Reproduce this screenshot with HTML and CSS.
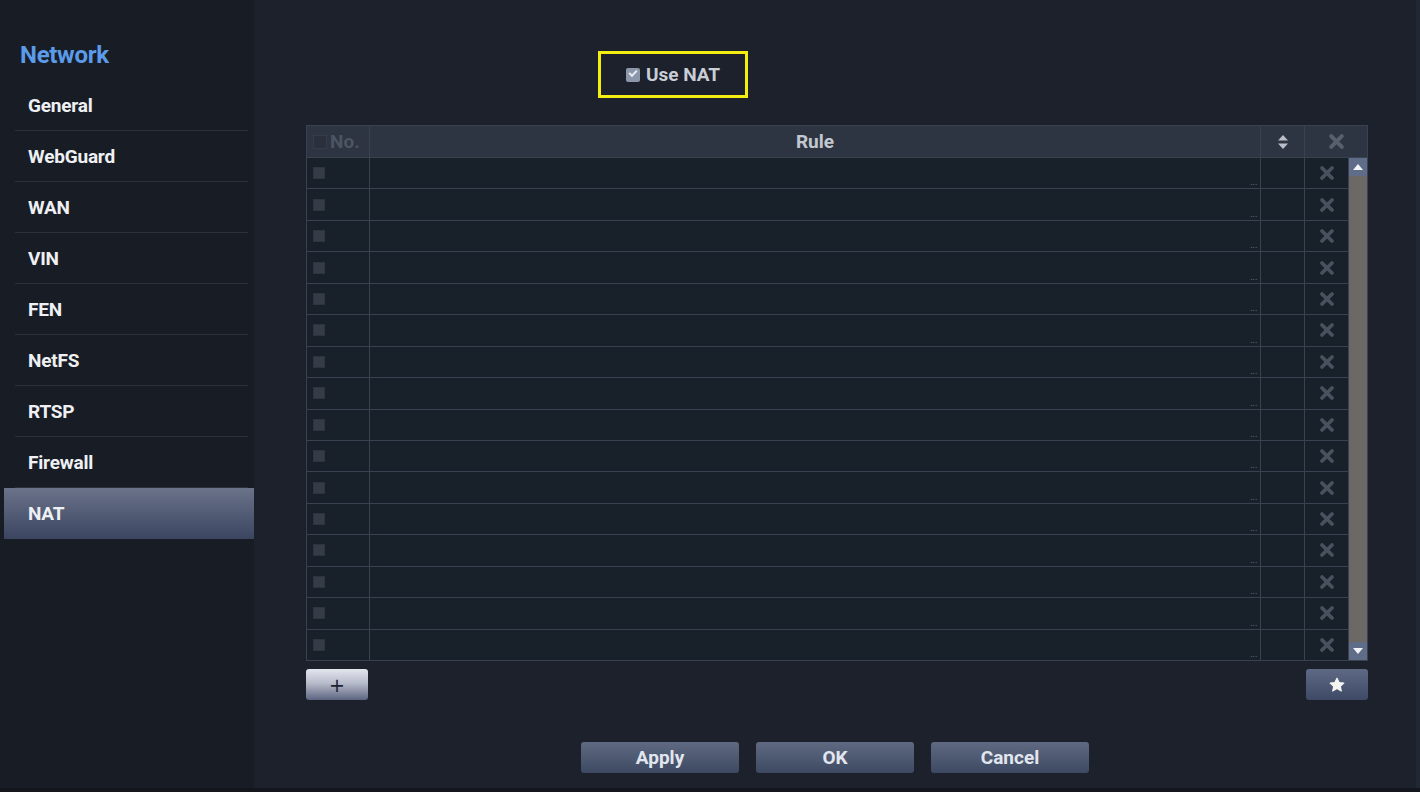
FILE: index.html
```html
<!DOCTYPE html>
<html lang="en">
<head>
  <meta charset="UTF-8" />
  <meta name="viewport" content="width=device-width, initial-scale=1.0" />
  <title>Network - NAT</title>
  <link rel="stylesheet" href="styles.css">
</head>
<body>
  <div class="screen">
    <aside class="sidebar">
      <h1 class="sidebar-title">Network</h1>
      <ul class="menu">
        <li>General</li>
        <li>WebGuard</li>
        <li>WAN</li>
        <li>VIN</li>
        <li>FEN</li>
        <li>NetFS</li>
        <li>RTSP</li>
        <li>Firewall</li>
        <li class="active">NAT</li>
      </ul>
    </aside>

    <main class="content">
      <div class="nat-toggle">
        <label class="check-label"><span class="check on"></span>Use NAT</label>
      </div>

      <div class="rule-table">
        <div class="rule-head">
          <div class="cell no-col"><span class="box"></span>No.</div>
          <div class="cell rule-col">Rule</div>
          <div class="cell sort-col">
            <svg width="12" height="16" viewBox="0 0 12 16"><path d="M6 1 L11 6.5 H1 Z M6 15 L11 9.5 H1 Z" fill="#b9bec8"/></svg>
          </div>
          <div class="cell del-col">
            <svg width="17" height="17" viewBox="0 0 16 16"><path d="M3 3 L13 13 M13 3 L3 13" stroke="#58606e" stroke-width="3.8" stroke-linecap="round"/></svg>
          </div>
        </div>
        <div class="rule-body">
          <div class="rows" id="rows"></div>
          <div class="scrollbar">
            <div class="arrow"><svg width="12" height="8" viewBox="0 0 12 8"><path d="M6 1 L11 7 H1 Z" fill="#f2f4f8"/></svg></div>
            <div class="track"></div>
            <div class="arrow"><svg width="12" height="8" viewBox="0 0 12 8"><path d="M6 7 L11 1 H1 Z" fill="#f2f4f8"/></svg></div>
          </div>
        </div>
      </div>

      <div class="table-actions">
        <button class="btn-add">+</button>
        <button class="btn-star">
          <svg width="16" height="16" viewBox="0 0 16 16"><path d="M8 1.2 L10.1 5.6 L14.8 6.1 L11.3 9.3 L12.3 14 L8 11.6 L3.7 14 L4.7 9.3 L1.2 6.1 L5.9 5.6 Z" fill="#f4f4f2" stroke="#f4f4f2" stroke-width="1.2" stroke-linejoin="round"/></svg>
        </button>
      </div>

      <div class="footer">
        <button class="btn">Apply</button>
        <button class="btn">OK</button>
        <button class="btn">Cancel</button>
      </div>
    </main>
  </div>

  <script>
    // 16 empty rule rows
    const rows = document.getElementById("rows");
    const xIcon = '<svg width="16" height="16" viewBox="0 0 16 16"><path d="M3 3 L13 13 M13 3 L3 13" stroke="#4a515e" stroke-width="3.8" stroke-linecap="round"/></svg>';
    for (let i = 0; i < 16; i++) {
      rows.innerHTML += `
        <div class="row">
          <div class="cell no-col"><span class="box"></span></div>
          <div class="cell rule-col"><span class="more">...</span></div>
          <div class="cell sort-col"></div>
          <div class="cell del-col">${xIcon}</div>
        </div>`;
    }
  </script>
</body>
</html>
```

FILE: styles.css
```css
body {
  margin: 0;
  background: #13161c;
  font-family: Roboto, 'Liberation Sans', sans-serif;
  font-weight: bold;
}
.screen {
  display: flex;
  width: 1420px;
  height: 788px;
}

/* left menu */
.sidebar {
  width: 254px;
  flex-shrink: 0;
  background: #181d25;
  padding-top: 37px;
  box-sizing: border-box;
}
.sidebar-title {
  margin: 0 0 7px 20px;
  font-size: 24px;
  line-height: 36px;
  color: #5b9be9;
  letter-spacing: -0.3px;
}
.menu {
  list-style: none;
  margin: 0;
  padding: 0;
}
.menu li {
  height: 50px;
  line-height: 52px;
  margin: 0 6px 0 15px;
  padding-left: 13px;
  border-bottom: 1px solid #2b3039;
  color: #eef0f4;
  font-size: 19px;
  letter-spacing: -0.2px;
}
.menu li.active {
  margin: 0 0 0 4px;
  padding-left: 24px;
  border-bottom: none;
  height: 51px;
  line-height: 52px;
  background: linear-gradient(#6b738a, #3b4560);
}

/* main panel */
.content {
  flex: 1;
  min-width: 0;
  background: #1c212b;
  padding: 51px 48px 0 52px;
  border-right: 4px solid #222833;
}
.nat-toggle {
  margin-left: 292px;
  width: 144px;
  height: 41px;
  border: 3px solid #f4ee10;
  display: flex;
  align-items: center;
  justify-content: center;
}
.check-label {
  display: flex;
  align-items: center;
  gap: 6px;
  color: #c9cdd6;
  font-size: 19px;
}
.check {
  width: 14px;
  height: 14px;
  border-radius: 2px;
  background: #8d97ab;
  position: relative;
}
.check.on::after {
  content: "";
  position: absolute;
  left: 3px;
  top: 2.5px;
  width: 8px;
  height: 5px;
  border-left: 2px solid #e8ecf2;
  border-bottom: 2px solid #e8ecf2;
  transform: rotate(-45deg);
  box-sizing: border-box;
}

/* rule table */
.rule-table {
  margin-top: 27px;
  width: 1062px;
  border: 1px solid #3a4251;
  box-sizing: border-box;
}
.rule-head {
  display: grid;
  grid-template-columns: 63px 891px 44px 1fr;
  height: 31px;
  background: #2d3542;
  border-bottom: 1px solid #3a4251;
}
.cell {
  border-right: 1px solid #3a4251;
  display: flex;
  align-items: center;
  justify-content: center;
  position: relative;
}
.cell:last-child {
  border-right: none;
}
.rule-head .no-col {
  justify-content: flex-start;
  padding-left: 6px;
  gap: 3px;
  color: #4d5462;
  font-size: 19px;
}
.rule-head .rule-col {
  color: #c3c7cf;
  font-size: 19px;
}
.box {
  width: 12px;
  height: 12px;
  background: #363c47;
  border: 1px solid #2e343e;
  box-sizing: border-box;
}
.rule-head .box {
  width: 14px;
  height: 14px;
  background: #2a303b;
  border-color: #363c47;
}
.rule-body {
  display: flex;
  height: 502px;
}
.rows {
  flex: 1;
  display: flex;
  flex-direction: column;
}
.row {
  flex: 1;
  display: grid;
  grid-template-columns: 63px 891px 44px 1fr;
  background: #182029;
  border-bottom: 1px solid #3a4251;
}
.row:last-child {
  border-bottom: none;
}
.row .cell:last-child {
  border-right: 1px solid #3a4251;
}
.row .no-col {
  justify-content: flex-start;
  padding-left: 6px;
}
.more {
  position: absolute;
  right: 3px;
  bottom: 1px;
  font-family: 'DejaVu Sans', sans-serif;
  font-size: 9px;
  line-height: 9px;
  letter-spacing: -0.5px;
  color: #5f6672;
  font-weight: normal;
}
.scrollbar {
  width: 18px;
  display: flex;
  flex-direction: column;
}
.arrow {
  height: 18px;
  background: #5f6d88;
  display: flex;
  align-items: center;
  justify-content: center;
}
.track {
  flex: 1;
  background: #6c6865;
}

/* add / favourite buttons under table */
.table-actions {
  width: 1062px;
  display: flex;
  justify-content: space-between;
  margin-top: 8px;
}
.btn-add, .btn-star {
  width: 62px;
  height: 31px;
  border: none;
  border-radius: 3px;
  padding: 0;
  display: flex;
  align-items: center;
  justify-content: center;
}
.btn-add {
  background: linear-gradient(#e4e6ee, #b8bccb 45%, #5c6480);
  color: #1d2230;
  font-size: 19px;
  font-family: 'DejaVu Sans', sans-serif;
}
.btn-star {
  background: linear-gradient(#5e6984, #3e4966);
}

.footer {
  display: flex;
  justify-content: center;
  gap: 17px;
  margin-top: 42px;
  padding-right: 4px;
}
.btn {
  width: 158px;
  height: 31px;
  border: none;
  border-radius: 3px;
  background: linear-gradient(#5f6a82, #3d4862);
  color: #e2e6ee;
  font-family: Roboto, 'Liberation Sans', sans-serif;
  font-weight: bold;
  font-size: 19px;
  padding: 0;
}
```
